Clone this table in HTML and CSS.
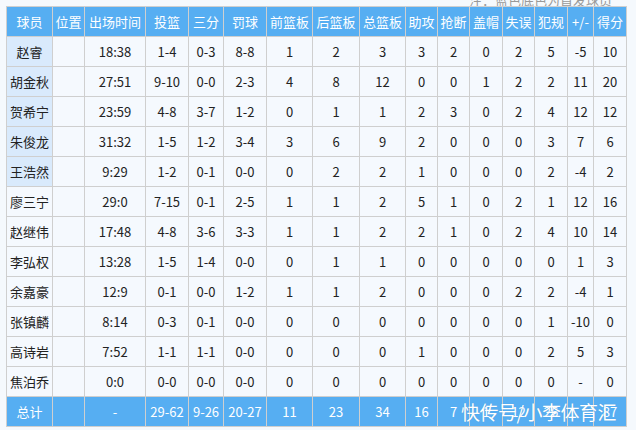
FILE: index.html
```html
<!DOCTYPE html>
<html lang="zh">
<head>
<meta charset="utf-8">
<link rel="stylesheet" href="styles.css">
</head>
<body>
<div class="page">
  <div class="note"><span>注：蓝色底色为首发球员</span></div>
  <table class="stats">
    <colgroup>
      <col style="width:46px"><col style="width:32px"><col style="width:61px"><col style="width:43px">
      <col style="width:35px"><col style="width:43px"><col style="width:46px"><col style="width:47px">
      <col style="width:46px"><col style="width:32px"><col style="width:32px"><col style="width:33px">
      <col style="width:32px"><col style="width:33px"><col style="width:26px"><col style="width:33px">
    </colgroup>
    <thead>
      <tr><th>球员</th><th>位置</th><th>出场时间</th><th>投篮</th><th>三分</th><th>罚球</th><th>前篮板</th><th>后篮板</th><th>总篮板</th><th>助攻</th><th>抢断</th><th>盖帽</th><th>失误</th><th>犯规</th><th>+/-</th><th>得分</th></tr>
    </thead>
    <tbody>
      <tr><td class="name starter">赵睿</td><td></td><td>18:38</td><td>1-4</td><td>0-3</td><td>8-8</td><td>1</td><td>2</td><td>3</td><td>3</td><td>2</td><td>0</td><td>2</td><td>5</td><td>-5</td><td>10</td></tr>
      <tr><td class="name starter">胡金秋</td><td></td><td>27:51</td><td>9-10</td><td>0-0</td><td>2-3</td><td>4</td><td>8</td><td>12</td><td>0</td><td>0</td><td>1</td><td>2</td><td>2</td><td>11</td><td>20</td></tr>
      <tr><td class="name starter">贺希宁</td><td></td><td>23:59</td><td>4-8</td><td>3-7</td><td>1-2</td><td>0</td><td>1</td><td>1</td><td>2</td><td>3</td><td>0</td><td>2</td><td>4</td><td>12</td><td>12</td></tr>
      <tr><td class="name starter">朱俊龙</td><td></td><td>31:32</td><td>1-5</td><td>1-2</td><td>3-4</td><td>3</td><td>6</td><td>9</td><td>2</td><td>0</td><td>0</td><td>0</td><td>3</td><td>7</td><td>6</td></tr>
      <tr><td class="name starter">王浩然</td><td></td><td>9:29</td><td>1-2</td><td>0-1</td><td>0-0</td><td>0</td><td>2</td><td>2</td><td>1</td><td>0</td><td>0</td><td>0</td><td>2</td><td>-4</td><td>2</td></tr>
      <tr><td class="name">廖三宁</td><td></td><td>29:0</td><td>7-15</td><td>0-1</td><td>2-5</td><td>1</td><td>1</td><td>2</td><td>5</td><td>1</td><td>0</td><td>2</td><td>1</td><td>12</td><td>16</td></tr>
      <tr><td class="name">赵继伟</td><td></td><td>17:48</td><td>4-8</td><td>3-6</td><td>3-3</td><td>1</td><td>1</td><td>2</td><td>2</td><td>1</td><td>0</td><td>2</td><td>4</td><td>10</td><td>14</td></tr>
      <tr><td class="name">李弘权</td><td></td><td>13:28</td><td>1-5</td><td>1-4</td><td>0-0</td><td>0</td><td>1</td><td>1</td><td>0</td><td>0</td><td>0</td><td>0</td><td>0</td><td>1</td><td>3</td></tr>
      <tr><td class="name">余嘉豪</td><td></td><td>12:9</td><td>0-1</td><td>0-0</td><td>1-2</td><td>1</td><td>1</td><td>2</td><td>0</td><td>0</td><td>0</td><td>2</td><td>2</td><td>-4</td><td>1</td></tr>
      <tr><td class="name">张镇麟</td><td></td><td>8:14</td><td>0-3</td><td>0-1</td><td>0-0</td><td>0</td><td>0</td><td>0</td><td>0</td><td>0</td><td>0</td><td>0</td><td>1</td><td>-10</td><td>0</td></tr>
      <tr><td class="name">高诗岩</td><td></td><td>7:52</td><td>1-1</td><td>1-1</td><td>0-0</td><td>0</td><td>0</td><td>0</td><td>1</td><td>0</td><td>0</td><td>0</td><td>2</td><td>5</td><td>3</td></tr>
      <tr><td class="name">焦泊乔</td><td></td><td>0:0</td><td>0-0</td><td>0-0</td><td>0-0</td><td>0</td><td>0</td><td>0</td><td>0</td><td>0</td><td>0</td><td>0</td><td>0</td><td>-</td><td>0</td></tr>
    </tbody>
    <tfoot>
      <tr><td>总计</td><td></td><td>-</td><td>29-62</td><td>9-26</td><td>20-27</td><td>11</td><td>23</td><td>34</td><td>16</td><td>7</td><td>1</td><td>12</td><td>26</td><td></td><td>87</td></tr>
    </tfoot>
  </table>
  <div class="watermark">快传号/小李体育汇</div>
</div>
</body>
</html>
```

FILE: styles.css
```css
html, body {
  margin: 0;
  padding: 0;
  background: #f5f9fd;
}
body {
  font-family: "Noto Sans CJK SC", "Noto Sans", sans-serif;
  color: #222;
}
.page {
  position: relative;
  width: 636px;
  height: 430px;
  padding: 0 0 0 6px;
  box-sizing: border-box;
  overflow: hidden;
}
.note {
  height: 6px;
  overflow: hidden;
  display: flex;
  justify-content: flex-end;
  align-items: flex-end;
  width: 606px;
  font-size: 13px;
  line-height: 13px;
  color: #999;
}
.note span {
  margin-bottom: 0;
}
.stats {
  border-collapse: collapse;
  table-layout: fixed;
  width: 620px;
  font-size: 13px;
  text-align: center;
  background: #f5f9fe;
}
.stats th,
.stats td {
  border: 1px solid #cfcfcf;
  height: 29px;
  padding: 0;
  white-space: nowrap;
  overflow: hidden;
}
.stats th {
  background: #56aef2;
  color: #fff;
  font-weight: normal;
  font-size: 13px;
}
.stats td.starter {
  background: #d9eafc;
}
.stats tfoot td {
  background: #56aef2;
  color: #fff;
}
.watermark {
  position: absolute;
  left: 461px;
  top: 400px;
  font-size: 19px;
  line-height: 24px;
  color: #fff;
  letter-spacing: -0.5px;
  text-shadow: 0 0 1px rgba(0,0,0,0.15);
}
```
